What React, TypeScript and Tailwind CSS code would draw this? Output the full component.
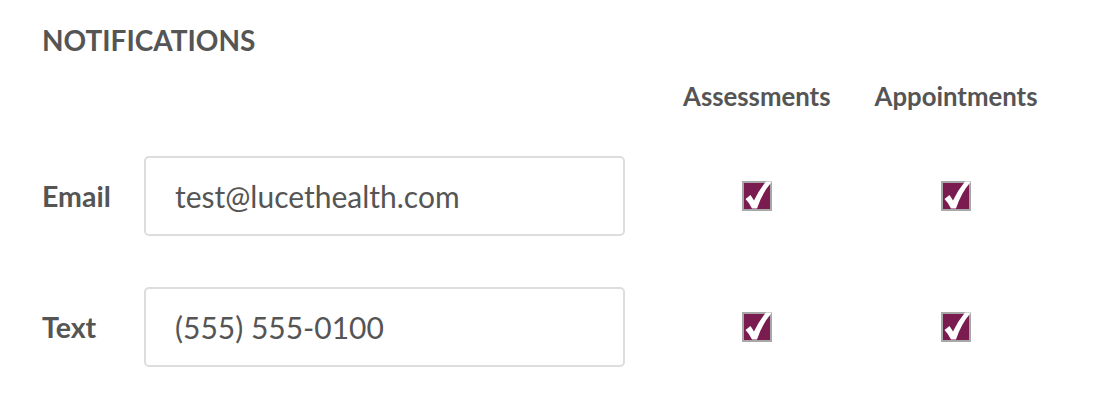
import React from "react";

const font = { fontFamily: "Lato, 'Noto Sans', sans-serif" };

function CheckMark() {
  return (
    <svg width="30" height="30" viewBox="0 0 30 30" className="block">
      <rect x="1" y="1" width="28" height="28" fill="#7b1c51" stroke="#a8a8a8" strokeWidth="2" />
      <path d="M3.5 18 L8.5 14 L12 19.5 Q17 9 24 0.5 L30 0.5 Q20 12 15 27.5 L10 27.5 Q7.5 22 3.5 18 Z" fill="#ffffff" />
    </svg>
  );
}

function Row({ label, value }: { label: string; value: string }) {
  return (
    <div className="flex items-center">
      <div className="w-[102px] text-[28.5px] font-bold text-[#555555]">{label}</div>
      <div className="flex h-[80px] w-[481px] items-center rounded-[5px] border-2 border-[#dddddd] bg-white pl-[29px] text-[30px] text-[#555555]">
        {value}
      </div>
      <div className="ml-[58px] flex w-[147px] justify-center">
        <CheckMark />
      </div>
      <div className="ml-[43px] flex w-[166px] justify-center">
        <CheckMark />
      </div>
    </div>
  );
}

export default function App() {
  return (
    <div className="h-[416px] w-[1106px] bg-white pl-[42px] pt-[22px]" style={font}>
      <h2 className="text-[28px] font-bold uppercase leading-[36px] text-[#555555]">Notifications</h2>
      <div className="mt-[20px] flex text-[25.75px] font-bold leading-[36px] text-[#555555]">
        <div className="w-[583px]" />
        <div className="ml-[58px] w-[147px] whitespace-nowrap text-center">Assessments</div>
        <div className="ml-[43px] w-[166px] whitespace-nowrap text-center">Appointments</div>
      </div>
      <div className="mt-[42px] flex flex-col gap-[51px]">
        <Row label="Email" value="test@lucethealth.com" />
        <Row label="Text" value="(555) 555-0100" />
      </div>
    </div>
  );
}
